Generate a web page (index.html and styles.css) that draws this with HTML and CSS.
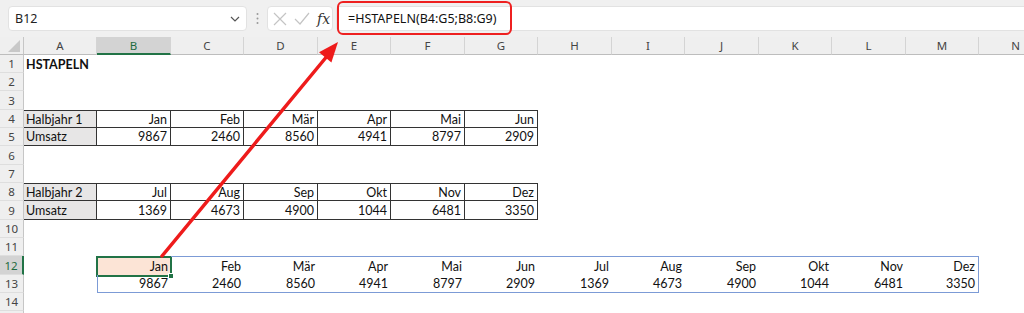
FILE: index.html
```html
<!DOCTYPE html>
<html lang="de">
<head>
<meta charset="utf-8">
<title>HSTAPELN</title>
<link rel="stylesheet" href="styles.css">
</head>
<body>
<div class="app">
  <div class="toolbar">
    <div class="namebox">
      <span class="name">B12</span>
      <svg class="chev" width="10" height="6" viewBox="0 0 10 6"><polyline points="1,1 5,5 9,1" fill="none" stroke="#555" stroke-width="1.2"/></svg>
    </div>
    <svg class="dots" width="3" height="13" viewBox="0 0 3 13"><circle cx="1.5" cy="2" r="1" fill="#999"/><circle cx="1.5" cy="6.5" r="1" fill="#999"/><circle cx="1.5" cy="11" r="1" fill="#999"/></svg>
    <div class="fxbox">
      <svg width="14" height="14" viewBox="0 0 14 14"><path d="M1 1 L13 13 M13 1 L1 13" stroke="#c4c4c4" stroke-width="1.2" fill="none"/></svg>
      <svg width="16" height="14" viewBox="0 0 16 14"><path d="M1 7 L6 12 L15 1" stroke="#c4c4c4" stroke-width="1.2" fill="none"/></svg>
      <span class="fx">fx</span>
    </div>
    <div class="formula"><span class="ftext">=HSTAPELN(B4:G5;B8:G9)</span></div>
  </div>

  <div class="sheet">
    <div class="row hdr">
      <div class="corner"><svg width="14" height="14" viewBox="0 0 14 14"><polygon points="13,1 13,13 1,13" fill="#c8c8c8"/></svg></div>
      <div class="ch">A</div><div class="ch sel">B</div><div class="ch">C</div><div class="ch">D</div><div class="ch">E</div><div class="ch">F</div><div class="ch">G</div><div class="ch">H</div><div class="ch">I</div><div class="ch">J</div><div class="ch">K</div><div class="ch">L</div><div class="ch">M</div><div class="ch">N</div>
    </div>

    <div class="row h18"><div class="rh">1</div><div class="c bold">HSTAPELN</div></div>
    <div class="row h18"><div class="rh">2</div></div>
    <div class="row h19"><div class="rh">3</div></div>

    <div class="row h18">
      <div class="rh">4</div>
      <div class="c t tt lbl">Halbjahr 1</div>
      <div class="c r t tt">Jan</div><div class="c r t tt">Feb</div><div class="c r t tt">Mär</div><div class="c r t tt">Apr</div><div class="c r t tt">Mai</div><div class="c r t tt">Jun</div>
    </div>
    <div class="row h18">
      <div class="rh">5</div>
      <div class="c t lbl">Umsatz</div>
      <div class="c r t">9867</div><div class="c r t">2460</div><div class="c r t">8560</div><div class="c r t">4941</div><div class="c r t">8797</div><div class="c r t">2909</div>
    </div>
    <div class="row h19"><div class="rh">6</div></div>
    <div class="row h18"><div class="rh">7</div></div>
    <div class="row h18">
      <div class="rh">8</div>
      <div class="c t tt lbl">Halbjahr 2</div>
      <div class="c r t tt">Jul</div><div class="c r t tt">Aug</div><div class="c r t tt">Sep</div><div class="c r t tt">Okt</div><div class="c r t tt">Nov</div><div class="c r t tt">Dez</div>
    </div>
    <div class="row h19">
      <div class="rh">9</div>
      <div class="c t lbl">Umsatz</div>
      <div class="c r t">1369</div><div class="c r t">4673</div><div class="c r t">4900</div><div class="c r t">1044</div><div class="c r t">6481</div><div class="c r t">3350</div>
    </div>
    <div class="row h18"><div class="rh">10</div></div>
    <div class="row h18"><div class="rh">11</div></div>
    <div class="row h19">
      <div class="rh rsel">12</div>
      <div class="c"></div>
      <div class="c r sp-t sp-l active">Jan<span class="selbox"><span class="handle"></span></span></div>
      <div class="c r sp-t">Feb</div><div class="c r sp-t">Mär</div><div class="c r sp-t">Apr</div><div class="c r sp-t">Mai</div><div class="c r sp-t">Jun</div><div class="c r sp-t">Jul</div><div class="c r sp-t">Aug</div><div class="c r sp-t">Sep</div><div class="c r sp-t">Okt</div><div class="c r sp-t">Nov</div><div class="c r sp-t sp-r">Dez</div>
    </div>
    <div class="row h18">
      <div class="rh">13</div>
      <div class="c"></div>
      <div class="c r sp-b sp-l">9867</div><div class="c r sp-b">2460</div><div class="c r sp-b">8560</div><div class="c r sp-b">4941</div><div class="c r sp-b">8797</div><div class="c r sp-b">2909</div><div class="c r sp-b">1369</div><div class="c r sp-b">4673</div><div class="c r sp-b">4900</div><div class="c r sp-b">1044</div><div class="c r sp-b">6481</div><div class="c r sp-b sp-r">3350</div>
    </div>
    <div class="row h18"><div class="rh">14</div></div>
    <div class="row h19"><div class="rh"></div></div>
  </div>

  <svg class="arrow" width="1024" height="313" viewBox="0 0 1024 313">
    <line x1="162" y1="256" x2="328" y2="55" stroke="#ee1b1b" stroke-width="3.5" stroke-linecap="round"/>
    <polygon points="338,42 331.4,62.5 319,52.3" fill="#ee1b1b"/>
  </svg>
</div>
</body>
</html>
```

FILE: styles.css
```css
* { box-sizing: border-box; }
html, body { margin: 0; padding: 0; background: #fff; overflow: hidden; }
.app { position: relative; width: 1024px; height: 313px; overflow: hidden; }

.toolbar {
  height: 37px;
  background: #f0f0f0;
  display: flex;
  align-items: center;
  padding-left: 8px;
  font-family: "Noto Sans", "Open Sans", sans-serif;
}
.namebox {
  width: 239px; height: 25px;
  background: #fff;
  border: 1px solid #e2e2e2;
  border-radius: 4px;
  display: flex; align-items: center; justify-content: space-between;
  padding: 0 6px 0 6px;
}
.name { font-size: 12.5px; color: #222; }
.dots { margin-left: 9px; }
.fxbox {
  margin-left: 8px;
  width: 66px; height: 25px;
  background: #fff;
  border: 1px solid #e2e2e2;
  border-radius: 4px;
  display: flex; align-items: center; gap: 7px;
  padding-left: 5px;
}
.fx { font-family: "DejaVu Serif", "Liberation Serif", serif; font-style: italic; font-size: 14px; color: #333; }
.formula {
  margin-left: 3px;
  flex: 1;
  height: 25px;
  background: #fff;
  border: 1px solid #e2e2e2;
  border-right: none;
  border-radius: 4px 0 0 4px;
  display: flex; align-items: center;
  padding-left: 11px;
}
.ftext { position: relative; font-size: 12.5px; color: #111; }
.ftext::after {
  content: "";
  position: absolute;
  left: -11px; right: -15px; top: -9px; bottom: -8px;
  border: 2px solid #ee2020;
  border-radius: 6px;
}

.sheet { font-family: "Lato", "Liberation Sans", sans-serif; }
.row {
  display: grid;
  grid-template-columns: 24px 73px 74px 73px 74px 73px 74px 73px 74px 73px 74px 73px 74px 73px 74px;
  height: 18px;
}
.h18 { height: 18px; }
.h19 { height: 19px; }
.hdr { height: 18px; }
.corner {
  background: #efefef;
  border-right: 1px solid #c6c6c6;
  border-bottom: 1px solid #bdbdbd;
  display: flex; align-items: flex-end; justify-content: flex-end;
  padding: 0 2px 1px 0;
}
.ch {
  background: #efefef;
  border-right: 1px solid #d4d4d4;
  border-bottom: 1px solid #bdbdbd;
  font-family: "Noto Sans", "Open Sans", sans-serif;
  font-size: 11.5px; color: #444;
  display: flex; align-items: center; justify-content: center;
}
.ch.sel { background: #d3d3d3; color: #1e6b41; border-bottom: 2px solid #217346; }
.rh {
  background: #efefef;
  border-right: 1px solid #c6c6c6;
  border-bottom: 1px solid #dedede;
  font-family: "Noto Sans", "Open Sans", sans-serif;
  font-size: 11.5px; color: #444;
  display: flex; align-items: center; justify-content: center;
}
.rh.rsel { background: #d3d3d3; color: #1e6b41; border-right: 2px solid #217346; }

.c {
  font-size: 12.5px; color: #111;
  display: flex; align-items: center;
  padding: 0 3px 0 2px;
  white-space: nowrap;
  position: relative;
}
.c.r { justify-content: flex-end; }
.bold { font-weight: bold; }
.t { border-right: 1px solid #333; border-bottom: 1px solid #333; }
.tt { border-top: 1px solid #333; }
.lbl { background: #e7e6e6; }

.sp-t { border-top: 1px solid #7c9bd6; }
.sp-b { border-bottom: 1px solid #7c9bd6; }
.sp-l { border-left: 1px solid #7c9bd6; }
.sp-r { border-right: 1px solid #7c9bd6; }

.active { background: #fce4d6; }
.selbox {
  position: absolute;
  left: -2px; top: -1px; right: -1px; bottom: -2px;
  border: 2px solid #217346;
}
.handle {
  position: absolute;
  right: -4px; bottom: -4px;
  width: 6px; height: 6px;
  background: #217346;
  border: 1px solid #fff;
}

.arrow { position: absolute; left: 0; top: 0; pointer-events: none; }
```
